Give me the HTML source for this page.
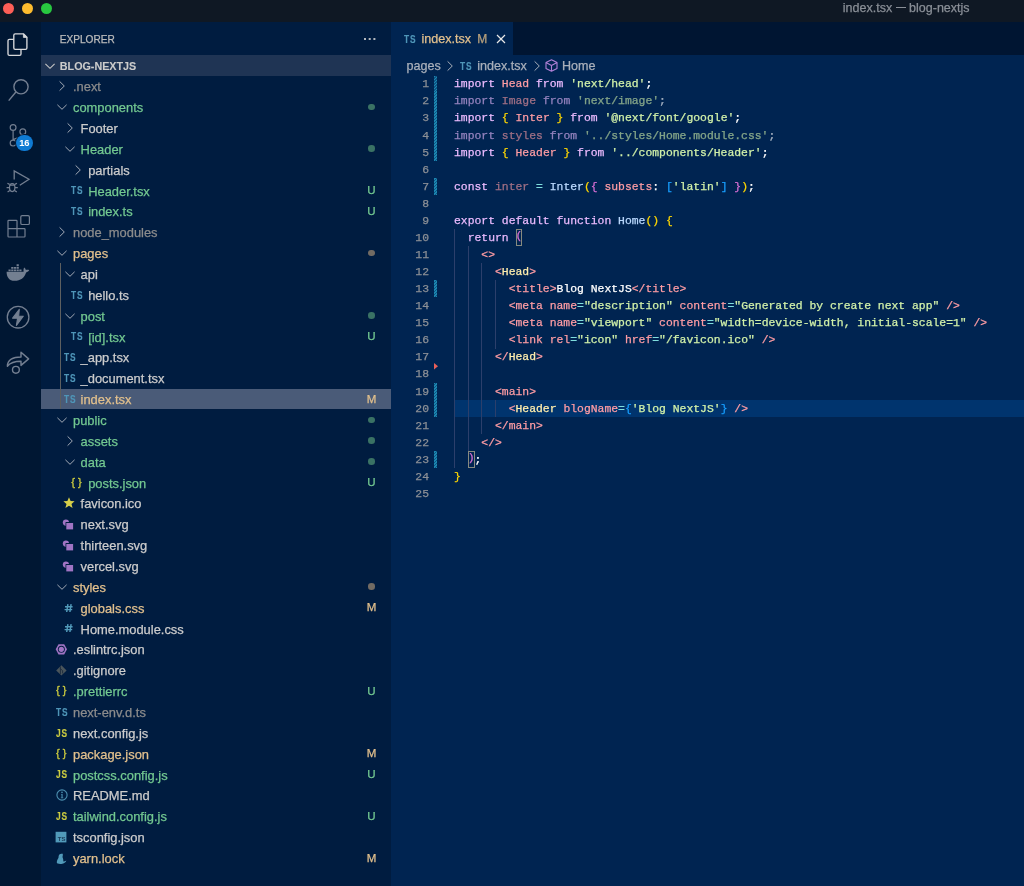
<!DOCTYPE html>
<html><head><meta charset="utf-8"><style>
*{margin:0;padding:0;box-sizing:border-box}
html,body{width:1024px;height:886px;overflow:hidden;background:#002451}
#root{position:absolute;left:0;top:0;width:1024px;height:886px;will-change:transform}
body{position:relative;font-family:"Liberation Sans",sans-serif;-webkit-text-stroke:0.25px currentColor}
.ab{position:absolute}
.ic{position:absolute;overflow:visible}
#title{position:absolute;left:0;top:0;width:1024px;height:22px;background:#0f1824}
.tl{position:absolute;top:3px;width:11.4px;height:11.4px;border-radius:50%}
#ttext{position:absolute;left:842.8px;top:0.8px;font-size:12.5px;color:#8a8f97;white-space:pre;line-height:14px}
#act{position:absolute;left:0;top:22px;width:40.65px;height:864px;background:#001733}
#side{position:absolute;left:40.65px;top:22px;width:350.05px;height:864px;background:#001c40}
#sechdr{position:absolute;left:40.65px;top:55.2px;width:350.05px;height:20.5px;background:#1f3454}
.fn{position:absolute;height:20.86px;line-height:20.86px;font-size:12.9px;white-space:pre;margin-top:1.5px}
.sel{position:absolute;left:40.65px;width:350.05px;height:20.86px;background:#4a5b78}
.dot{position:absolute;left:368px;width:6.6px;height:6.6px;border-radius:50%}
.dl{position:absolute;left:366px;width:11px;text-align:center;height:20.86px;line-height:20.86px;font-size:11.5px}
.tsi,.jsi{position:absolute;font-size:10.2px;font-weight:bold;line-height:11px;letter-spacing:1px;transform:scaleX(0.82);transform-origin:0 0;-webkit-text-stroke:0.15px currentColor}
.tsi{color:#4f96b8}
.jsi{color:#cbcb41}
.jsoni{position:absolute;font-size:11px;line-height:14px;color:#c8c83e;white-space:pre;-webkit-text-stroke:0.35px currentColor}
.cssi{position:absolute;font-size:13.5px;line-height:14px;color:#519aba;font-weight:bold;font-style:italic}
#tabs{position:absolute;left:390.7px;top:22px;width:633.3px;height:32.5px;background:#001532}
#tab{position:absolute;left:390.7px;top:22px;width:122.8px;height:32.5px;background:#002451}
#crumb{position:absolute;left:390.7px;top:54.5px;width:633.3px;height:21px;background:#002451}
.ln{position:absolute;padding-top:0.8px;left:400px;width:29px;text-align:right;font-family:"Liberation Mono",monospace;font-size:11.4px;line-height:17.07px;height:17.07px;color:#8c9096}
.cl{position:absolute;padding-top:0.8px;left:454px;font-family:"Liberation Mono",monospace;font-size:11.4px;line-height:17.07px;height:17.07px;white-space:pre}
.ig{position:absolute;width:1px;background:#2c3f6b}
.gm{position:absolute;left:434px;width:3px;background:repeating-linear-gradient(-45deg,#1c87b0 0 1.2px,#0d5585 1.2px 2.1px)}
.bx{display:inline-block;height:16.4px;line-height:15.3px;vertical-align:top;margin-top:-0.6px;box-shadow:inset 0 0 0 1px #868a80}
.badge{position:absolute;left:16.2px;top:135.4px;width:16.4px;height:15.4px;border-radius:8px;background:#0f7bd3;color:#fff;font-size:9.4px;font-weight:bold;text-align:center;line-height:15.6px;-webkit-text-stroke:0;box-shadow:0 0 0 1px #001733}
.sb{position:absolute;font-size:12.55px;white-space:pre;line-height:16px}
</style></head>
<body><div id="root">
<div id="title">
 <div class="tl" style="left:2.9px;background:#fe5f57"></div>
 <div class="tl" style="left:21.8px;background:#febc2e"></div>
 <div class="tl" style="left:40.8px;background:#28c840"></div>
 <div id="ttext">index.tsx <span style="display:inline-block;width:10px;height:1.1px;background:#8a8f97;vertical-align:4.2px"></span> blog-nextjs</div>
</div>
<div id="act"></div>

<svg class="ic" style="left:5px;top:30px" width="26" height="28" viewBox="0 0 26 28">
 <path d="M8.8 9.3 L4.4 9.3 Q3.0 9.3 3.0 10.7 L3.0 23.9 Q3.0 25.3 4.4 25.3 L14.6 25.3 Q16.0 25.3 16.0 23.9 L16.0 19.4" fill="none" stroke="#d7d9dc" stroke-width="1.35"/>
 <path d="M10.2 3.9 L18.6 3.9 L21.9 7.2 L21.9 18 Q21.9 19.4 20.5 19.4 L10.2 19.4 Q8.8 19.4 8.8 18 L8.8 5.3 Q8.8 3.9 10.2 3.9 Z" fill="none" stroke="#d7d9dc" stroke-width="1.35"/>
 <path d="M18.4 3.9 L18.4 7.4 L21.9 7.4 Z" fill="#d7d9dc" stroke="#d7d9dc" stroke-width="0.8"/>
</svg>
<svg class="ic" style="left:5px;top:73.5px" width="28" height="30" viewBox="0 0 28 30">
 <circle cx="16" cy="12.8" r="7.1" fill="none" stroke="#737f91" stroke-width="1.4"/>
 <path d="M10.9 18 L3.7 26.6" fill="none" stroke="#737f91" stroke-width="1.45"/>
</svg>
<svg class="ic" style="left:5px;top:118px" width="30" height="32" viewBox="0 0 30 32">
 <circle cx="8.1" cy="9.5" r="2.9" fill="none" stroke="#737f91" stroke-width="1.2"/>
 <circle cx="17.8" cy="13.7" r="2.9" fill="none" stroke="#737f91" stroke-width="1.2"/>
 <circle cx="8.1" cy="25.1" r="2.9" fill="none" stroke="#737f91" stroke-width="1.2"/>
 <path d="M8.1 12.4 L8.1 22.2 M17.8 16.6 C17.8 19.2 12.6 19.4 8.1 21.6" fill="none" stroke="#737f91" stroke-width="1.2"/>
</svg>
<div class="badge">16</div>
<svg class="ic" style="left:3px;top:165px" width="30" height="30" viewBox="0 0 30 30">
 <path d="M11.2 14.6 L11.2 5.9 L26 14.2 L16.8 20.2" fill="none" stroke="#737f91" stroke-width="1.3" stroke-linejoin="miter"/>
 <ellipse cx="9.2" cy="22.6" rx="2.7" ry="3.9" fill="none" stroke="#737f91" stroke-width="1.25"/>
 <path d="M6.6 20.2 L11.8 20.2 M6.6 19.4 L4.4 18.2 M11.8 19.4 L14 18.2 M6.4 22.6 L3.6 22.6 M12 22.6 L14.8 22.6 M6.8 25.4 L4.6 27 M11.6 25.4 L13.8 27" fill="none" stroke="#737f91" stroke-width="1.2"/>
</svg>
<svg class="ic" style="left:4.5px;top:212px" width="30" height="30" viewBox="0 0 30 30">
 <path d="M4 8.4 L11.3 8.4 Q12 8.4 12 9.1 L12 16.6 L19.3 16.6 Q20 16.6 20 17.3 L20 24.3 Q20 25 19.3 25 L3.7 25 Q3 25 3 24.3 L3 9.1 Q3 8.4 3.7 8.4 Z M3 16.6 L12 16.6 L12 25" fill="none" stroke="#737f91" stroke-width="1.2"/>
 <rect x="15.8" y="3.7" width="8.6" height="8.8" rx="1.3" fill="none" stroke="#737f91" stroke-width="1.2"/>
</svg>
<svg class="ic" style="left:0px;top:255px" width="41" height="35" viewBox="0 0 41 35">
 <path d="M6.6 16.7 L23.6 16.7 C23.4 15.2 23.6 13.6 24.2 12.6 C25 13.3 25.6 14 25.9 14.9 C27 14.6 28.2 14.7 29.2 15.1 C28.6 16.4 27.6 17.2 26.1 17.4 C24.6 22.6 20.4 25.8 14.6 25.8 C9.2 25.8 6.6 22.2 6.6 16.7 Z" fill="#737f91"/>
 <path d="M8.5 14.4 h2.2 v1.8 h-2.2 z M11.2 14.4 h2.2 v1.8 h-2.2 z M13.9 14.4 h2.2 v1.8 h-2.2 z M16.6 14.4 h2.2 v1.8 h-2.2 z M19.3 14.4 h2.2 v1.8 h-2.2 z M11.2 11.9 h2.2 v1.9 h-2.2 z M13.9 11.9 h2.2 v1.9 h-2.2 z M16.6 11.9 h2.2 v1.9 h-2.2 z M16.6 9.3 h2.2 v1.9 h-2.2 z" fill="#737f91"/>
</svg>
<svg class="ic" style="left:4px;top:303px" width="30" height="30" viewBox="0 0 30 30">
 <circle cx="14.1" cy="14.2" r="10.8" fill="none" stroke="#737f91" stroke-width="1.3"/>
 <path d="M15.3 6.4 L8.6 15.2 L13.6 15.2 L12.4 22.4 L19.3 13.2 L14.6 13.2 Z" fill="#737f91" stroke="#737f91" stroke-width="1.1" stroke-linejoin="round"/>
</svg>
<svg class="ic" style="left:4px;top:348px" width="30" height="28" viewBox="0 0 30 28">
 <path d="M3.4 18.2 C3.4 11.8 9 9 17 9 L17 4.3 L24.6 10.9 L17 17.4 L17 13.3 C11.3 13.3 6.6 14.3 3.4 18.2 Z" fill="none" stroke="#737f91" stroke-width="1.45" stroke-linejoin="round"/>
 <circle cx="11.9" cy="21.8" r="3.4" fill="none" stroke="#737f91" stroke-width="1.4"/>
</svg>

<div id="side"></div>
<div class="sb" style="left:59.8px;top:31.5px;font-size:10.1px;color:#bbbbbb">EXPLORER</div>
<div style="position:absolute;left:363.7px;top:37.9px;width:2px;height:2px;background:#b4b8be;box-shadow:4.7px 0 0 #b4b8be,9.4px 0 0 #b4b8be"></div>
<div id="sechdr"></div>
<svg class="ic" style="left:44.2px;top:59.6px" width="12" height="12" viewBox="0 0 12 12"><path d="M1.4 3.8 L6 8.3 L10.6 3.8" fill="none" stroke="#c5c5c5" stroke-width="1.1"/></svg>
<div class="sb" style="left:59.8px;top:57.7px;font-size:10.75px;font-weight:bold;color:#cccccc;-webkit-text-stroke:0.1px">BLOG-NEXTJS</div>
<svg class="ic" style="left:56.35px;top:80.13px" width="12" height="12" viewBox="0 0 12 12"><path d="M3.6 1.4 L8.3 6 L3.6 10.6" fill="none" stroke="#a3aab6" stroke-width="1"/></svg>
<div class="fn" style="left:73.00px;top:75.70px;color:#8c8c8c">.next</div>
<svg class="ic" style="left:56.35px;top:100.99px" width="12" height="12" viewBox="0 0 12 12"><path d="M1.4 3.8 L6 8.3 L10.6 3.8" fill="none" stroke="#a3aab6" stroke-width="1"/></svg>
<div class="fn" style="left:73.00px;top:96.56px;color:#73c991">components</div>
<div class="dot" style="top:103.69px;background:#3a7264"></div>
<svg class="ic" style="left:63.93px;top:121.85px" width="12" height="12" viewBox="0 0 12 12"><path d="M3.6 1.4 L8.3 6 L3.6 10.6" fill="none" stroke="#a3aab6" stroke-width="1"/></svg>
<div class="fn" style="left:80.58px;top:117.42px;color:#cccccc">Footer</div>
<svg class="ic" style="left:63.93px;top:142.71px" width="12" height="12" viewBox="0 0 12 12"><path d="M1.4 3.8 L6 8.3 L10.6 3.8" fill="none" stroke="#a3aab6" stroke-width="1"/></svg>
<div class="fn" style="left:80.58px;top:138.28px;color:#73c991">Header</div>
<div class="dot" style="top:145.41px;background:#3a7264"></div>
<svg class="ic" style="left:71.51px;top:163.57px" width="12" height="12" viewBox="0 0 12 12"><path d="M3.6 1.4 L8.3 6 L3.6 10.6" fill="none" stroke="#a3aab6" stroke-width="1"/></svg>
<div class="fn" style="left:88.16px;top:159.14px;color:#cccccc">partials</div>
<div class="tsi" style="left:71.26px;top:185.33px">TS</div>
<div class="fn" style="left:88.16px;top:180.00px;color:#73c991">Header.tsx</div>
<div class="dl" style="top:180.00px;color:#73c991">U</div>
<div class="tsi" style="left:71.26px;top:206.19px">TS</div>
<div class="fn" style="left:88.16px;top:200.86px;color:#73c991">index.ts</div>
<div class="dl" style="top:200.86px;color:#73c991">U</div>
<svg class="ic" style="left:56.35px;top:226.15px" width="12" height="12" viewBox="0 0 12 12"><path d="M3.6 1.4 L8.3 6 L3.6 10.6" fill="none" stroke="#a3aab6" stroke-width="1"/></svg>
<div class="fn" style="left:73.00px;top:221.72px;color:#8c8c8c">node_modules</div>
<svg class="ic" style="left:56.35px;top:247.01px" width="12" height="12" viewBox="0 0 12 12"><path d="M1.4 3.8 L6 8.3 L10.6 3.8" fill="none" stroke="#a3aab6" stroke-width="1"/></svg>
<div class="fn" style="left:73.00px;top:242.58px;color:#e2c08d">pages</div>
<div class="dot" style="top:249.71px;background:#726b63"></div>
<svg class="ic" style="left:63.93px;top:267.87px" width="12" height="12" viewBox="0 0 12 12"><path d="M1.4 3.8 L6 8.3 L10.6 3.8" fill="none" stroke="#a3aab6" stroke-width="1"/></svg>
<div class="fn" style="left:80.58px;top:263.44px;color:#cccccc">api</div>
<div class="tsi" style="left:71.26px;top:289.63px">TS</div>
<div class="fn" style="left:88.16px;top:284.30px;color:#cccccc">hello.ts</div>
<svg class="ic" style="left:63.93px;top:309.59px" width="12" height="12" viewBox="0 0 12 12"><path d="M1.4 3.8 L6 8.3 L10.6 3.8" fill="none" stroke="#a3aab6" stroke-width="1"/></svg>
<div class="fn" style="left:80.58px;top:305.16px;color:#73c991">post</div>
<div class="dot" style="top:312.29px;background:#3a7264"></div>
<div class="tsi" style="left:71.26px;top:331.35px">TS</div>
<div class="fn" style="left:88.16px;top:326.02px;color:#73c991">[id].tsx</div>
<div class="dl" style="top:326.02px;color:#73c991">U</div>
<div class="tsi" style="left:63.68px;top:352.21px">TS</div>
<div class="fn" style="left:80.58px;top:346.88px;color:#cccccc">_app.tsx</div>
<div class="tsi" style="left:63.68px;top:373.07px">TS</div>
<div class="fn" style="left:80.58px;top:367.74px;color:#cccccc">_document.tsx</div>
<div class="sel" style="top:388.60px"></div>
<div class="tsi" style="left:63.68px;top:393.93px">TS</div>
<div class="fn" style="left:80.58px;top:388.60px;color:#e2c08d">index.tsx</div>
<div class="dl" style="top:388.60px;color:#e2c08d">M</div>
<svg class="ic" style="left:56.35px;top:413.89px" width="12" height="12" viewBox="0 0 12 12"><path d="M1.4 3.8 L6 8.3 L10.6 3.8" fill="none" stroke="#a3aab6" stroke-width="1"/></svg>
<div class="fn" style="left:73.00px;top:409.46px;color:#73c991">public</div>
<div class="dot" style="top:416.59px;background:#3a7264"></div>
<svg class="ic" style="left:63.93px;top:434.75px" width="12" height="12" viewBox="0 0 12 12"><path d="M3.6 1.4 L8.3 6 L3.6 10.6" fill="none" stroke="#a3aab6" stroke-width="1"/></svg>
<div class="fn" style="left:80.58px;top:430.32px;color:#73c991">assets</div>
<div class="dot" style="top:437.45px;background:#3a7264"></div>
<svg class="ic" style="left:63.93px;top:455.61px" width="12" height="12" viewBox="0 0 12 12"><path d="M1.4 3.8 L6 8.3 L10.6 3.8" fill="none" stroke="#a3aab6" stroke-width="1"/></svg>
<div class="fn" style="left:80.58px;top:451.18px;color:#73c991">data</div>
<div class="dot" style="top:458.31px;background:#3a7264"></div>
<div class="jsoni" style="left:71.16px;top:474.57px">{ }</div>
<div class="fn" style="left:88.16px;top:472.04px;color:#73c991">posts.json</div>
<div class="dl" style="top:472.04px;color:#73c991">U</div>
<svg class="ic" style="left:62.98px;top:496.93px" width="12" height="12" viewBox="0 0 12 12"><path d="M6 0.3 L7.6 4.1 L11.6 4.3 L8.5 6.9 L9.6 11 L6 8.7 L2.4 11 L3.5 6.9 L0.4 4.3 L4.4 4.1 Z" fill="#d6cf4a"/></svg>
<div class="fn" style="left:80.58px;top:492.90px;color:#cccccc">favicon.ico</div>
<svg class="ic" style="left:63.38px;top:518.19px" width="12" height="12" viewBox="0 0 12 12"><circle cx="2.9" cy="4.6" r="3.1" fill="#a074c4"/><circle cx="4.2" cy="5.9" r="1.5" fill="#001c40"/><rect x="2.6" y="4" width="9" height="8.4" fill="#001c40"/><rect x="3.3" y="5" width="6.8" height="6.4" fill="#a074c4"/></svg>
<div class="fn" style="left:80.58px;top:513.76px;color:#cccccc">next.svg</div>
<svg class="ic" style="left:63.38px;top:539.05px" width="12" height="12" viewBox="0 0 12 12"><circle cx="2.9" cy="4.6" r="3.1" fill="#a074c4"/><circle cx="4.2" cy="5.9" r="1.5" fill="#001c40"/><rect x="2.6" y="4" width="9" height="8.4" fill="#001c40"/><rect x="3.3" y="5" width="6.8" height="6.4" fill="#a074c4"/></svg>
<div class="fn" style="left:80.58px;top:534.62px;color:#cccccc">thirteen.svg</div>
<svg class="ic" style="left:63.38px;top:559.91px" width="12" height="12" viewBox="0 0 12 12"><circle cx="2.9" cy="4.6" r="3.1" fill="#a074c4"/><circle cx="4.2" cy="5.9" r="1.5" fill="#001c40"/><rect x="2.6" y="4" width="9" height="8.4" fill="#001c40"/><rect x="3.3" y="5" width="6.8" height="6.4" fill="#a074c4"/></svg>
<div class="fn" style="left:80.58px;top:555.48px;color:#cccccc">vercel.svg</div>
<svg class="ic" style="left:56.35px;top:580.77px" width="12" height="12" viewBox="0 0 12 12"><path d="M1.4 3.8 L6 8.3 L10.6 3.8" fill="none" stroke="#a3aab6" stroke-width="1"/></svg>
<div class="fn" style="left:73.00px;top:576.34px;color:#e2c08d">styles</div>
<div class="dot" style="top:583.47px;background:#726b63"></div>
<svg class="ic" style="left:64.38px;top:601.63px" width="10" height="12" viewBox="0 0 10 12"><path d="M3.9 2.2 L2.7 10 M7.1 2.2 L5.9 10 M1.0 4.8 L8.6 4.8 M0.6 7.6 L8.2 7.6" fill="none" stroke="#519aba" stroke-width="1.45"/></svg>
<div class="fn" style="left:80.58px;top:597.20px;color:#e2c08d">globals.css</div>
<div class="dl" style="top:597.20px;color:#e2c08d">M</div>
<svg class="ic" style="left:64.38px;top:622.49px" width="10" height="12" viewBox="0 0 10 12"><path d="M3.9 2.2 L2.7 10 M7.1 2.2 L5.9 10 M1.0 4.8 L8.6 4.8 M0.6 7.6 L8.2 7.6" fill="none" stroke="#519aba" stroke-width="1.45"/></svg>
<div class="fn" style="left:80.58px;top:618.06px;color:#cccccc">Home.module.css</div>
<svg class="ic" style="left:54.80px;top:643.15px" width="13" height="13" viewBox="0 0 13 13"><path d="M3.5 1.2 L9.2 1.2 L12 6.3 L9.2 11.4 L3.5 11.4 L0.7 6.3 Z" fill="#a074c4"/><circle cx="6.35" cy="6.3" r="3.5" fill="#001c40"/><circle cx="6.35" cy="6.3" r="2.6" fill="#a074c4"/></svg>
<div class="fn" style="left:73.00px;top:638.92px;color:#cccccc">.eslintrc.json</div>
<svg class="ic" style="left:54.80px;top:664.21px" width="13" height="13" viewBox="0 0 13 13"><path d="M6.4 1.2 L11.6 6.4 L6.4 11.6 L1.2 6.4 Z" fill="#4a555b"/><path d="M5.4 2.4 L5.4 10.2 M5.4 4.6 L7.6 6.8 L7.6 9.4" fill="none" stroke="#1c2a3c" stroke-width="0.9"/></svg>
<div class="fn" style="left:73.00px;top:659.78px;color:#cccccc">.gitignore</div>
<div class="jsoni" style="left:56.00px;top:683.17px">{ }</div>
<div class="fn" style="left:73.00px;top:680.64px;color:#73c991">.prettierrc</div>
<div class="dl" style="top:680.64px;color:#73c991">U</div>
<div class="tsi" style="left:56.10px;top:706.83px">TS</div>
<div class="fn" style="left:73.00px;top:701.50px;color:#8c8c8c">next-env.d.ts</div>
<div class="jsi" style="left:56.00px;top:727.69px">JS</div>
<div class="fn" style="left:73.00px;top:722.36px;color:#cccccc">next.config.js</div>
<div class="jsoni" style="left:56.00px;top:745.75px">{ }</div>
<div class="fn" style="left:73.00px;top:743.22px;color:#e2c08d">package.json</div>
<div class="dl" style="top:743.22px;color:#e2c08d">M</div>
<div class="jsi" style="left:56.00px;top:769.41px">JS</div>
<div class="fn" style="left:73.00px;top:764.08px;color:#73c991">postcss.config.js</div>
<div class="dl" style="top:764.08px;color:#73c991">U</div>
<svg class="ic" style="left:55.70px;top:789.37px" width="12" height="12" viewBox="0 0 12 12"><circle cx="6" cy="6" r="5.1" fill="none" stroke="#4b8fb0" stroke-width="1.1"/><path d="M4.9 5 L6.6 5 L6.6 8.6 L7.3 8.6 L7.3 9.2 L4.8 9.2 L4.8 8.6 L5.5 8.6 L5.5 5.6 L4.9 5.6 Z" fill="#4b8fb0"/><circle cx="6" cy="3.4" r="0.8" fill="#4b8fb0"/></svg>
<div class="fn" style="left:73.00px;top:784.94px;color:#cccccc">README.md</div>
<div class="jsi" style="left:56.00px;top:811.13px">JS</div>
<div class="fn" style="left:73.00px;top:805.80px;color:#73c991">tailwind.config.js</div>
<div class="dl" style="top:805.80px;color:#73c991">U</div>
<svg class="ic" style="left:54.60px;top:830.99px" width="12" height="12" viewBox="0 0 12 12"><rect x="0.6" y="0.8" width="10.8" height="10.6" fill="#519aba"/><text x="6.6" y="10.2" font-size="6" font-family="Liberation Sans" font-weight="bold" fill="#1a3a58" text-anchor="middle">TS</text></svg>
<div class="fn" style="left:73.00px;top:826.66px;color:#cccccc">tsconfig.json</div>
<svg class="ic" style="left:54.60px;top:851.55px" width="12" height="12" viewBox="0 0 12 12"><path d="M4.4 2.6 C5 1.7 6.6 1.5 7.8 1.7 C8 2.9 7.7 4.1 7.5 5.1 C8.1 6.7 8.5 8.1 8.3 9.5 C9.5 9.5 10.5 9.1 11.3 8.5 C10.9 10.6 8.1 12 5.3 12 C3.3 12 1.8 11.6 1.8 10.6 C1.8 8.3 2.9 6.9 3.5 5.7 C3.5 4.5 3.9 3.3 4.4 2.6 Z" fill="#519aba"/></svg>
<div class="fn" style="left:73.00px;top:847.52px;color:#e2c08d">yarn.lock</div>
<div class="dl" style="top:847.52px;color:#e2c08d">M</div>
<div style="position:absolute;left:60.2px;top:263.44px;width:1px;height:146.02px;background:#5d5f60"></div>
<div id="tabs"></div>
<div id="tab"></div>
<div class="tsi" style="left:403.8px;top:33.7px">TS</div>
<div class="sb" style="left:421.5px;top:31px;color:#e2c08d">index.tsx</div>
<div class="sb" style="left:477.3px;top:31px;color:#b8a17c;font-size:12px">M</div>
<svg class="ic" style="left:494.6px;top:33px" width="12" height="12" viewBox="0 0 12 12"><path d="M2 2 L10 10 M10 2 L2 10" stroke="#e8e8e8" stroke-width="1.2"/></svg>
<div id="crumb"></div>
<div class="sb" style="left:406.5px;top:57.5px;color:#a9b0bb">pages</div>
<svg class="ic" style="left:444px;top:60px" width="12" height="12" viewBox="0 0 12 12"><path d="M3.6 1.4 L8.3 6 L3.6 10.6" fill="none" stroke="#a9b0bb" stroke-width="1"/></svg>
<div class="tsi" style="left:460.3px;top:60.5px">TS</div>
<div class="sb" style="left:477.2px;top:57.5px;color:#a9b0bb">index.tsx</div>
<svg class="ic" style="left:531px;top:60px" width="12" height="12" viewBox="0 0 12 12"><path d="M3.6 1.4 L8.3 6 L3.6 10.6" fill="none" stroke="#a9b0bb" stroke-width="1"/></svg>
<svg class="ic" style="left:544.5px;top:58.8px" width="13" height="13" viewBox="0 0 13 13"><path d="M6.5 0.8 L12 3.6 L12 9.4 L6.5 12.2 L1 9.4 L1 3.6 Z M1 3.6 L6.5 6.4 L12 3.6 M6.5 6.4 L6.5 12.2" fill="none" stroke="#b180d7" stroke-width="1.1" stroke-linejoin="round"/></svg>
<div class="sb" style="left:562px;top:57.5px;color:#a9b0bb">Home</div>
<div style="position:absolute;left:454.00px;top:399.83px;width:570.00px;height:17.07px;background:#00346e"></div>
<div class="ig" style="left:454.00px;top:229.13px;height:17.27px"></div>
<div class="ig" style="left:454.00px;top:246.20px;height:17.27px"></div>
<div class="ig" style="left:467.68px;top:246.20px;height:17.27px"></div>
<div class="ig" style="left:454.00px;top:263.27px;height:17.27px"></div>
<div class="ig" style="left:467.68px;top:263.27px;height:17.27px"></div>
<div class="ig" style="left:481.36px;top:263.27px;height:17.27px"></div>
<div class="ig" style="left:454.00px;top:280.34px;height:17.27px"></div>
<div class="ig" style="left:467.68px;top:280.34px;height:17.27px"></div>
<div class="ig" style="left:481.36px;top:280.34px;height:17.27px"></div>
<div class="ig" style="left:495.04px;top:280.34px;height:17.27px"></div>
<div class="ig" style="left:454.00px;top:297.41px;height:17.27px"></div>
<div class="ig" style="left:467.68px;top:297.41px;height:17.27px"></div>
<div class="ig" style="left:481.36px;top:297.41px;height:17.27px"></div>
<div class="ig" style="left:495.04px;top:297.41px;height:17.27px"></div>
<div class="ig" style="left:454.00px;top:314.48px;height:17.27px"></div>
<div class="ig" style="left:467.68px;top:314.48px;height:17.27px"></div>
<div class="ig" style="left:481.36px;top:314.48px;height:17.27px"></div>
<div class="ig" style="left:495.04px;top:314.48px;height:17.27px"></div>
<div class="ig" style="left:454.00px;top:331.55px;height:17.27px"></div>
<div class="ig" style="left:467.68px;top:331.55px;height:17.27px"></div>
<div class="ig" style="left:481.36px;top:331.55px;height:17.27px"></div>
<div class="ig" style="left:495.04px;top:331.55px;height:17.27px"></div>
<div class="ig" style="left:454.00px;top:348.62px;height:17.27px"></div>
<div class="ig" style="left:467.68px;top:348.62px;height:17.27px"></div>
<div class="ig" style="left:481.36px;top:348.62px;height:17.27px"></div>
<div class="ig" style="left:454.00px;top:365.69px;height:17.27px"></div>
<div class="ig" style="left:467.68px;top:365.69px;height:17.27px"></div>
<div class="ig" style="left:481.36px;top:365.69px;height:17.27px"></div>
<div class="ig" style="left:454.00px;top:382.76px;height:17.27px"></div>
<div class="ig" style="left:467.68px;top:382.76px;height:17.27px"></div>
<div class="ig" style="left:481.36px;top:382.76px;height:17.27px"></div>
<div class="ig" style="left:454.00px;top:399.83px;height:17.27px"></div>
<div class="ig" style="left:467.68px;top:399.83px;height:17.27px"></div>
<div class="ig" style="left:481.36px;top:399.83px;height:17.27px"></div>
<div class="ig" style="left:495.04px;top:399.83px;height:17.27px"></div>
<div class="ig" style="left:454.00px;top:416.90px;height:17.27px"></div>
<div class="ig" style="left:467.68px;top:416.90px;height:17.27px"></div>
<div class="ig" style="left:481.36px;top:416.90px;height:17.27px"></div>
<div class="ig" style="left:454.00px;top:433.97px;height:17.27px"></div>
<div class="ig" style="left:467.68px;top:433.97px;height:17.27px"></div>
<div class="ig" style="left:454.00px;top:451.04px;height:17.27px"></div>
<div class="ln" style="top:75.50px">1</div>
<div class="cl" style="top:75.50px"><span style="color:#ebbbff">import </span><span style="color:#ff9da4">Head</span><span style="color:#ebbbff"> from </span><span style="color:#d1f1a9">&#x27;next/head&#x27;</span><span style="color:#ffffff">;</span></div>
<div class="ln" style="top:92.57px">2</div>
<div class="cl" style="top:92.57px"><span style="color:#ebbbff;opacity:.62">import </span><span style="color:#ff9da4;opacity:.62">Image</span><span style="color:#ebbbff;opacity:.62"> from </span><span style="color:#d1f1a9;opacity:.62">&#x27;next/image&#x27;</span><span style="color:#ffffff;opacity:.62">;</span></div>
<div class="ln" style="top:109.64px">3</div>
<div class="cl" style="top:109.64px"><span style="color:#ebbbff">import </span><span style="color:#ffd700">{</span><span style="color:#ff9da4"> Inter </span><span style="color:#ffd700">}</span><span style="color:#ebbbff"> from </span><span style="color:#d1f1a9">&#x27;@next/font/google&#x27;</span><span style="color:#ffffff">;</span></div>
<div class="ln" style="top:126.71px">4</div>
<div class="cl" style="top:126.71px"><span style="color:#ebbbff;opacity:.62">import </span><span style="color:#ff9da4;opacity:.62">styles</span><span style="color:#ebbbff;opacity:.62"> from </span><span style="color:#d1f1a9;opacity:.62">&#x27;../styles/Home.module.css&#x27;</span><span style="color:#ffffff;opacity:.62">;</span></div>
<div class="ln" style="top:143.78px">5</div>
<div class="cl" style="top:143.78px"><span style="color:#ebbbff">import </span><span style="color:#ffd700">{</span><span style="color:#ff9da4"> Header </span><span style="color:#ffd700">}</span><span style="color:#ebbbff"> from </span><span style="color:#d1f1a9">&#x27;../components/Header&#x27;</span><span style="color:#ffffff">;</span></div>
<div class="ln" style="top:160.85px">6</div>
<div class="cl" style="top:160.85px"></div>
<div class="ln" style="top:177.92px">7</div>
<div class="cl" style="top:177.92px"><span style="color:#ebbbff">const </span><span style="color:#ff9da4;opacity:.62">inter</span><span style="color:#80dede"> = </span><span style="color:#bbdaff">Inter</span><span style="color:#ffd700">(</span><span style="color:#da70d6">{</span><span style="color:#ff9da4"> subsets</span><span style="color:#ffffff">: </span><span style="color:#179fff">[</span><span style="color:#d1f1a9">&#x27;latin&#x27;</span><span style="color:#179fff">]</span><span style="color:#ffffff"> </span><span style="color:#da70d6">}</span><span style="color:#ffd700">)</span><span style="color:#ffffff">;</span></div>
<div class="ln" style="top:194.99px">8</div>
<div class="cl" style="top:194.99px"></div>
<div class="ln" style="top:212.06px">9</div>
<div class="cl" style="top:212.06px"><span style="color:#ebbbff">export default function </span><span style="color:#bbdaff">Home</span><span style="color:#ffd700">()</span><span style="color:#ffffff"> </span><span style="color:#ffd700">{</span></div>
<div class="ln" style="top:229.13px">10</div>
<div class="cl" style="top:229.13px"><span style="color:#ffffff">  </span><span style="color:#ebbbff">return </span><span class="bx" style="color:#da70d6">(</span></div>
<div class="ln" style="top:246.20px">11</div>
<div class="cl" style="top:246.20px"><span style="color:#ffffff">    </span><span style="color:#ff9da4">&lt;&gt;</span></div>
<div class="ln" style="top:263.27px">12</div>
<div class="cl" style="top:263.27px"><span style="color:#ffffff">      </span><span style="color:#ff9da4">&lt;</span><span style="color:#ffeead">Head</span><span style="color:#ff9da4">&gt;</span></div>
<div class="ln" style="top:280.34px">13</div>
<div class="cl" style="top:280.34px"><span style="color:#ffffff">        </span><span style="color:#ff9da4">&lt;title&gt;</span><span style="color:#ffffff">Blog NextJS</span><span style="color:#ff9da4">&lt;/title&gt;</span></div>
<div class="ln" style="top:297.41px">14</div>
<div class="cl" style="top:297.41px"><span style="color:#ffffff">        </span><span style="color:#ff9da4">&lt;meta </span><span style="color:#ff9da4">name</span><span style="color:#80dede">=</span><span style="color:#d1f1a9">&quot;description&quot;</span><span style="color:#ff9da4"> content</span><span style="color:#80dede">=</span><span style="color:#d1f1a9">&quot;Generated by create next app&quot;</span><span style="color:#ff9da4"> /&gt;</span></div>
<div class="ln" style="top:314.48px">15</div>
<div class="cl" style="top:314.48px"><span style="color:#ffffff">        </span><span style="color:#ff9da4">&lt;meta </span><span style="color:#ff9da4">name</span><span style="color:#80dede">=</span><span style="color:#d1f1a9">&quot;viewport&quot;</span><span style="color:#ff9da4"> content</span><span style="color:#80dede">=</span><span style="color:#d1f1a9">&quot;width=device-width, initial-scale=1&quot;</span><span style="color:#ff9da4"> /&gt;</span></div>
<div class="ln" style="top:331.55px">16</div>
<div class="cl" style="top:331.55px"><span style="color:#ffffff">        </span><span style="color:#ff9da4">&lt;link </span><span style="color:#ff9da4">rel</span><span style="color:#80dede">=</span><span style="color:#d1f1a9">&quot;icon&quot;</span><span style="color:#ff9da4"> href</span><span style="color:#80dede">=</span><span style="color:#d1f1a9">&quot;/favicon.ico&quot;</span><span style="color:#ff9da4"> /&gt;</span></div>
<div class="ln" style="top:348.62px">17</div>
<div class="cl" style="top:348.62px"><span style="color:#ffffff">      </span><span style="color:#ff9da4">&lt;/</span><span style="color:#ffeead">Head</span><span style="color:#ff9da4">&gt;</span></div>
<div class="ln" style="top:365.69px">18</div>
<div class="cl" style="top:365.69px"></div>
<div class="ln" style="top:382.76px">19</div>
<div class="cl" style="top:382.76px"><span style="color:#ffffff">      </span><span style="color:#ff9da4">&lt;</span><span style="color:#ff9da4">main</span><span style="color:#ff9da4">&gt;</span></div>
<div class="ln" style="top:399.83px">20</div>
<div class="cl" style="top:399.83px"><span style="color:#ffffff">        </span><span style="color:#ff9da4">&lt;</span><span style="color:#ffeead">Header</span><span style="color:#ff9da4"> blogName</span><span style="color:#80dede">=</span><span style="color:#179fff">{</span><span style="color:#d1f1a9">&#x27;Blog NextJS&#x27;</span><span style="color:#179fff">}</span><span style="color:#ff9da4"> /&gt;</span></div>
<div class="ln" style="top:416.90px">21</div>
<div class="cl" style="top:416.90px"><span style="color:#ffffff">      </span><span style="color:#ff9da4">&lt;/</span><span style="color:#ff9da4">main</span><span style="color:#ff9da4">&gt;</span></div>
<div class="ln" style="top:433.97px">22</div>
<div class="cl" style="top:433.97px"><span style="color:#ffffff">    </span><span style="color:#ff9da4">&lt;/&gt;</span></div>
<div class="ln" style="top:451.04px">23</div>
<div class="cl" style="top:451.04px"><span style="color:#ffffff">  </span><span class="bx" style="color:#da70d6">)</span><span style="color:#ffffff">;</span></div>
<div class="ln" style="top:468.11px">24</div>
<div class="cl" style="top:468.11px"><span style="color:#ffd700">}</span></div>
<div class="ln" style="top:485.18px">25</div>
<div class="cl" style="top:485.18px"></div>
<div class="gm" style="top:75.50px;height:85.35px"></div>
<div class="gm" style="top:177.92px;height:17.07px"></div>
<div class="gm" style="top:280.34px;height:17.07px"></div>
<div class="gm" style="top:382.76px;height:34.14px"></div>
<div class="gm" style="top:451.04px;height:17.07px"></div>
<svg class="ic" style="left:434px;top:362.9px" width="4" height="6.4" viewBox="0 0 4 6.4"><path d="M0 0 L4 3.2 L0 6.4 Z" fill="#e8605a"/></svg>
</div></body></html>
